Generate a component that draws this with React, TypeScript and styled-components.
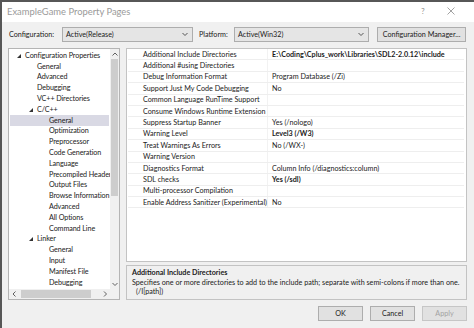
import styled, { createGlobalStyle } from 'styled-components';

const GlobalStyle = createGlobalStyle`
  html, body { margin: 0; padding: 0; background: #f0f0f0; }
  body {
    font-family: Lato, "Liberation Sans", sans-serif;
    font-size: 7.2px;
    color: #1b1b1b;
  }
`;

const Window = styled.div`
  width: 474px;
  height: 328px;
  box-sizing: border-box;
  border-left: 2px solid #575757;
  border-top: 2px solid #575757;
  background: #f0f0f0;
  display: flex;
  flex-direction: column;
  overflow: hidden;
`;

const TitleBar = styled.div`
  height: 20px;
  background: #ffffff;
  display: flex;
  align-items: center;
  padding: 0 9px 2px 5px;
  box-sizing: border-box;
`;

const Title = styled.span`
  flex: 1;
  font-size: 9.4px;
  color: #9a9a9a;
`;

const TitleButton = styled.span`
  width: 28px;
  display: flex;
  justify-content: center;
  color: #8a8a8a;
  font-size: 7.5px;
`;

const ConfigRow = styled.div`
  margin-top: 4px;
  height: 16px;
  display: flex;
  align-items: center;
  padding-left: 7px;
`;

const Label = styled.span<{ $w: number; $ml?: number }>`
  flex: 0 0 ${(p) => p.$w}px;
  margin-left: ${(p) => p.$ml ?? 0}px;
  white-space: nowrap;
`;

const Select = styled.div<{ $w: number }>`
  width: ${(p) => p.$w}px;
  height: 15px;
  box-sizing: border-box;
  border: 1px solid #adadad;
  background: #e5e5e5;
  display: flex;
  align-items: center;
  justify-content: space-between;
  padding: 0 4px 0 3px;
`;

const PushButton = styled.div<{ $w: number; $ml?: number; $disabled?: boolean }>`
  width: ${(p) => p.$w}px;
  height: 15px;
  margin-left: ${(p) => p.$ml ?? 0}px;
  box-sizing: border-box;
  border: 1px solid ${(p) => (p.$disabled ? '#c6c6c6' : '#adadad')};
  background: #e1e1e1;
  color: ${(p) => (p.$disabled ? '#a3a3a3' : '#1b1b1b')};
  display: flex;
  align-items: center;
  justify-content: center;
  white-space: nowrap;
`;

const Main = styled.div`
  margin-top: 6px;
  height: 252px;
  display: flex;
  gap: 6px;
  padding: 0 7px 0 6px;
`;

const TreeBox = styled.div`
  width: 112px;
  box-sizing: border-box;
  border: 1px solid #b4b4b4;
  background: #ffffff;
  display: grid;
  grid-template-columns: 1fr 9px;
  grid-template-rows: 1fr 10px;
  overflow: hidden;
`;

const TreeList = styled.div`
  padding-top: 1px;
  overflow: hidden;
`;

const TreeRow = styled.div<{ $level: number; $selected?: boolean }>`
  height: 10.8px;
  display: flex;
  align-items: center;
  margin: 0 1px;
  padding-left: ${(p) => 15 + p.$level * 12}px;
  position: relative;
  white-space: nowrap;
  letter-spacing: -0.1px;
  background: ${(p) => (p.$selected ? '#d9d9e4' : 'transparent')};
`;

const Expander = styled.svg`
  position: absolute;
  margin-left: -8px;
  margin-top: 1px;
`;

const VScroll = styled.div`
  background: #f0f0f0;
  display: flex;
  flex-direction: column;
`;

const HScroll = styled.div`
  background: #f0f0f0;
  display: flex;
  align-items: center;
`;

const Corner = styled.div`
  background: #f0f0f0;
`;

const ScrollArrow = styled.div`
  flex: 0 0 10px;
  display: flex;
  align-items: center;
  justify-content: center;
`;

const VThumb = styled.div`
  margin: 0 1px;
  height: 137px;
  background: #cdcdcd;
`;

const Track = styled.div<{ $row?: boolean }>`
  flex: 1;
  display: flex;
  flex-direction: ${(p) => (p.$row ? 'row' : 'column')};
  ${(p) => (p.$row ? 'align-self: stretch; padding-left: 2px;' : '')}
`;

const HThumb = styled.div`
  width: 70px;
  margin: 1px 0;
  background: #cdcdcd;
`;

const RightColumn = styled.div`
  flex: 1;
  display: flex;
  flex-direction: column;
  gap: 3px;
`;

const Grid = styled.div`
  height: 214px;
  box-sizing: border-box;
  border: 1px solid #c3c3c3;
  background: #ffffff;
  padding: 0 2px 0 1px;
`;

const PropRow = styled.div`
  height: 11.4px;
  box-sizing: border-box;
  display: grid;
  grid-template-columns: 140px 1fr;
  border-bottom: 1px solid #eeeeee;
  white-space: nowrap;
`;

const PropName = styled.div`
  padding-left: 15px;
  display: flex;
  align-items: center;
  border-right: 1px solid #f2f2f2;
`;

const PropValue = styled.div<{ $bold?: boolean }>`
  padding-left: 4px;
  display: flex;
  align-items: center;
  font-weight: ${(p) => (p.$bold ? 700 : 400)};
  overflow: hidden;
`;

const Description = styled.div`
  flex: 1;
  box-sizing: border-box;
  border: 1px solid #c3c3c3;
  background: #f0f0f0;
  padding: 2px 4px 0 5px;
  line-height: 9.6px;
`;

const DescTitle = styled.div`
  font-weight: 700;
`;

const DescLine = styled.div<{ $indent?: number }>`
  padding-left: ${(p) => p.$indent ?? 0}px;
  white-space: nowrap;
`;

const Footer = styled.div`
  margin-top: 6px;
  height: 15px;
  display: flex;
  justify-content: flex-end;
  gap: 7px;
  padding-right: 7px;
`;

const Chevron = ({ dir, color = '#606060' }: { dir: 'up' | 'down' | 'left' | 'right'; color?: string }) => {
  const pts = {
    up: '0.5,3.5 3,1 5.5,3.5',
    down: '0.5,1 3,3.5 5.5,1',
    left: '3.5,0.5 1,3 3.5,5.5',
    right: '1,0.5 3.5,3 1,5.5',
  }[dir];
  const wide = dir === 'up' || dir === 'down';
  return (
    <svg width={wide ? 6 : 5} height={wide ? 5 : 6} viewBox={wide ? '0 0 6 5' : '0 0 5 6'}>
      <polyline points={pts} fill="none" stroke={color} strokeWidth="1" />
    </svg>
  );
};

type TreeItem = { label: string; level: number; open?: boolean; selected?: boolean };

const treeItems: TreeItem[] = [
  { label: 'Configuration Properties', level: 0, open: true },
  { label: 'General', level: 1 },
  { label: 'Advanced', level: 1 },
  { label: 'Debugging', level: 1 },
  { label: 'VC++ Directories', level: 1 },
  { label: 'C/C++', level: 1, open: true },
  { label: 'General', level: 2, selected: true },
  { label: 'Optimization', level: 2 },
  { label: 'Preprocessor', level: 2 },
  { label: 'Code Generation', level: 2 },
  { label: 'Language', level: 2 },
  { label: 'Precompiled Headers', level: 2 },
  { label: 'Output Files', level: 2 },
  { label: 'Browse Information', level: 2 },
  { label: 'Advanced', level: 2 },
  { label: 'All Options', level: 2 },
  { label: 'Command Line', level: 2 },
  { label: 'Linker', level: 1, open: true },
  { label: 'General', level: 2 },
  { label: 'Input', level: 2 },
  { label: 'Manifest File', level: 2 },
  { label: 'Debugging', level: 2 },
];

const props: { name: string; value?: string; bold?: boolean }[] = [
  { name: 'Additional Include Directories', value: 'E:\\Coding\\Cplus_work\\Libraries\\SDL2-2.0.12\\include', bold: true },
  { name: 'Additional #using Directories' },
  { name: 'Debug Information Format', value: 'Program Database (/Zi)' },
  { name: 'Support Just My Code Debugging', value: 'No' },
  { name: 'Common Language RunTime Support' },
  { name: 'Consume Windows Runtime Extension' },
  { name: 'Suppress Startup Banner', value: 'Yes (/nologo)' },
  { name: 'Warning Level', value: 'Level3 (/W3)', bold: true },
  { name: 'Treat Warnings As Errors', value: 'No (/WX-)' },
  { name: 'Warning Version' },
  { name: 'Diagnostics Format', value: 'Column Info (/diagnostics:column)' },
  { name: 'SDL checks', value: 'Yes (/sdl)', bold: true },
  { name: 'Multi-processor Compilation' },
  { name: 'Enable Address Sanitizer (Experimental)', value: 'No' },
];

export default function App() {
  return (
    <>
      <GlobalStyle />
      <Window>
        <TitleBar>
          <Title>ExampleGame Property Pages</Title>
          <TitleButton>?</TitleButton>
          <TitleButton>
            <svg width="8" height="8" viewBox="0 0 8 8">
              <path d="M0.5 0.5 L7.5 7.5 M7.5 0.5 L0.5 7.5" stroke="#8a8a8a" strokeWidth="0.8" />
            </svg>
          </TitleButton>
        </TitleBar>

        <ConfigRow>
          <Label $w={53}>Configuration:</Label>
          <Select $w={131}>
            <span>Active(Release)</span>
            <Chevron dir="down" color="#555" />
          </Select>
          <Label $w={35} $ml={6}>Platform:</Label>
          <Select $w={135}>
            <span>Active(Win32)</span>
            <Chevron dir="down" color="#555" />
          </Select>
          <PushButton $w={89} $ml={8}>Configuration Manager...</PushButton>
        </ConfigRow>

        <Main>
          <TreeBox>
            <TreeList>
              {treeItems.map((it, i) => (
                <TreeRow key={i} $level={it.level} $selected={it.selected}>
                  {it.open && (
                    <Expander width="4" height="4" viewBox="0 0 4 4">
                      <polygon points="0,4 4,4 4,0" fill="#333" />
                    </Expander>
                  )}
                  {it.label}
                </TreeRow>
              ))}
            </TreeList>
            <VScroll>
              <ScrollArrow><Chevron dir="up" /></ScrollArrow>
              <Track>
                <VThumb />
              </Track>
              <ScrollArrow><Chevron dir="down" /></ScrollArrow>
            </VScroll>
            <HScroll>
              <ScrollArrow><Chevron dir="left" /></ScrollArrow>
              <Track $row>
                <HThumb />
              </Track>
              <ScrollArrow><Chevron dir="right" /></ScrollArrow>
            </HScroll>
            <Corner />
          </TreeBox>

          <RightColumn>
            <Grid>
              {props.map((p, i) => (
                <PropRow key={i}>
                  <PropName>{p.name}</PropName>
                  <PropValue $bold={p.bold}>{p.value ?? ''}</PropValue>
                </PropRow>
              ))}
            </Grid>
            <Description>
              <DescTitle>Additional Include Directories</DescTitle>
              <DescLine>
                Specifies one or more directories to add to the include path; separate with semi-colons if more than one.
              </DescLine>
              <DescLine $indent={4}>(/I[path])</DescLine>
            </Description>
          </RightColumn>
        </Main>

        <Footer>
          <PushButton $w={45}>OK</PushButton>
          <PushButton $w={45}>Cancel</PushButton>
          <PushButton $w={45} $disabled>Apply</PushButton>
        </Footer>
      </Window>
    </>
  );
}
